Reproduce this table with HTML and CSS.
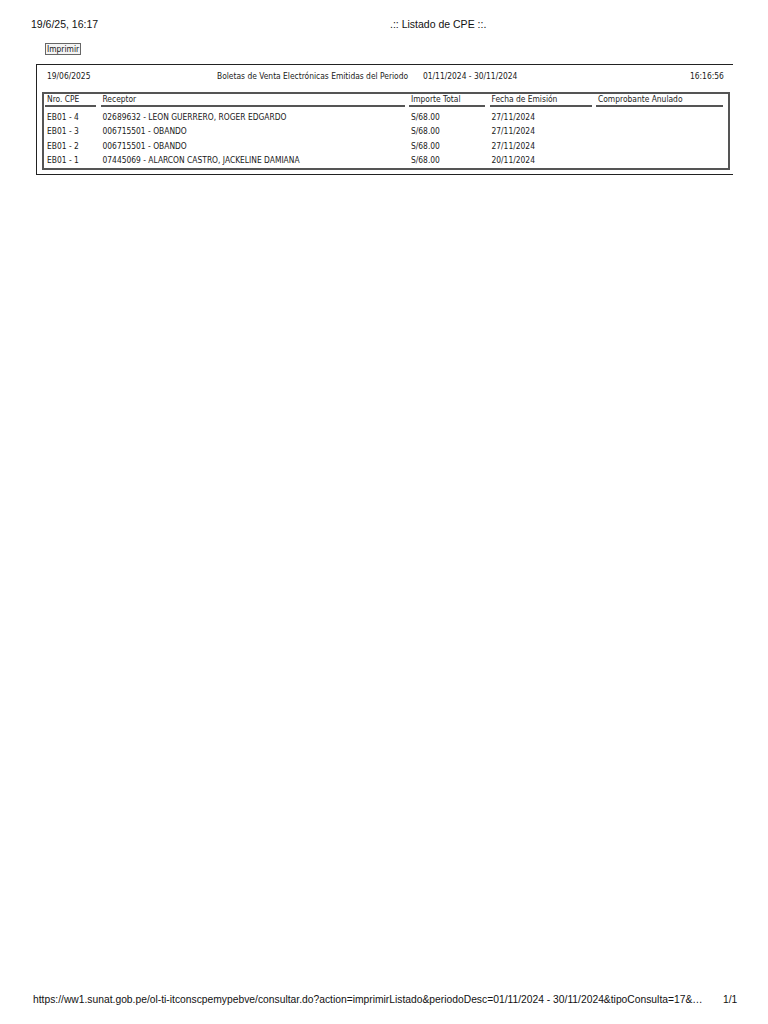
FILE: index.html
```html
<!DOCTYPE html>
<html lang="es">
<head>
<meta charset="utf-8">
<title>.:: Listado de CPE ::.</title>
<link rel="stylesheet" href="styles.css">
</head>
<body>
<header class="print-head">
  <span class="print-date">19/6/25, 16:17</span>
  <span class="print-title">.:: Listado de CPE ::.</span>
</header>
<main class="page">
  <div class="toolbar"><button class="btn" type="button">Imprimir</button></div>
  <section class="report">
    <div class="meta">
      <span class="meta-date">19/06/2025</span>
      <span class="meta-title">Boletas de Venta Electrónicas Emitidas del Periodo</span>
      <span class="meta-period">01/11/2024 - 30/11/2024</span>
      <span class="meta-time">16:16:56</span>
    </div>
    <div class="grid-box">
      <div class="grid">
        <div class="th">Nro. CPE</div>
        <div class="th">Receptor</div>
        <div class="th">Importe Total</div>
        <div class="th">Fecha de Emisión</div>
        <div class="th">Comprobante Anulado</div>

        <div class="td">EB01 - 4</div>
        <div class="td">02689632 - LEON GUERRERO, ROGER EDGARDO</div>
        <div class="td">S/68.00</div>
        <div class="td">27/11/2024</div>
        <div class="td"></div>

        <div class="td">EB01 - 3</div>
        <div class="td">006715501 - OBANDO</div>
        <div class="td">S/68.00</div>
        <div class="td">27/11/2024</div>
        <div class="td"></div>

        <div class="td">EB01 - 2</div>
        <div class="td">006715501 - OBANDO</div>
        <div class="td">S/68.00</div>
        <div class="td">27/11/2024</div>
        <div class="td"></div>

        <div class="td">EB01 - 1</div>
        <div class="td">07445069 - ALARCON CASTRO, JACKELINE DAMIANA</div>
        <div class="td">S/68.00</div>
        <div class="td">20/11/2024</div>
        <div class="td"></div>
      </div>
    </div>
  </section>
</main>
<footer class="print-foot">
  <span class="print-url">https://ww1.sunat.gob.pe/ol-ti-itconscpemypebve/consultar.do?action=imprimirListado&amp;periodoDesc=01/11/2024 - 30/11/2024&amp;tipoConsulta=17&amp;…</span>
  <span class="print-page">1/1</span>
</footer>
</body>
</html>
```

FILE: styles.css
```css
html, body {
  margin: 0;
  padding: 0;
  background: #fff;
}
body {
  width: 768px;
  height: 1024px;
  display: flex;
  flex-direction: column;
  color: #1a1a1a;
  font-family: "DejaVu Sans Condensed", "DejaVu Sans", sans-serif;
  font-size: 8.4px;
}
.print-head {
  display: flex;
  padding: 17px 0 0 31px;
  font-family: "Liberation Sans", Arial, sans-serif;
  font-size: 10.5px;
  line-height: 14px;
  color: #111;
}
.print-date {
  width: 359px;
}
.page {
  flex: 1;
  padding-top: 12px;
}
.toolbar {
  padding-left: 45px;
  height: 21px;
}
.btn {
  display: block;
  margin: 0;
  padding: 0 1px;
  height: 12px;
  font-family: "DejaVu Sans Condensed", "DejaVu Sans", sans-serif;
  font-size: 8.4px;
  line-height: 10px;
  color: #111;
  background: #f4f4f4;
  border: 1px solid #666;
  border-radius: 0;
}
.report {
  margin-left: 36px;
  width: 696px;
  border-top: 1px solid #222;
  border-left: 1px solid #222;
  border-bottom: 1px solid #222;
  padding-bottom: 4px;
}
.meta {
  display: flex;
  height: 22px;
  padding-top: 5px;
  line-height: 12px;
}
.meta-date {
  padding-left: 10px;
  width: 170px;
}
.meta-title {
  width: 206px;
}
.meta-period {
  width: 267px;
}
.grid-box {
  margin-left: 5px;
  width: 682px;
  border: 2px solid #555;
  padding: 0 1px 0 1px;
}
.grid {
  display: grid;
  grid-template-columns: 51px 304px 76px 102px 127px;
  column-gap: 4.5px;
}
.th {
  height: 11px;
  line-height: 11px;
  padding-left: 2px;
  border-bottom: 2px solid #555;
  margin-bottom: 2.7px;
  white-space: nowrap;
}
.td {
  height: 14.6px;
  line-height: 14.6px;
  padding-left: 2px;
  white-space: nowrap;
}
.print-foot {
  display: flex;
  padding: 0 0 17px 33px;
  font-family: "Liberation Sans", Arial, sans-serif;
  font-size: 10.3px;
  line-height: 14px;
  color: #111;
}
.print-url {
  width: 690px;
}
```
